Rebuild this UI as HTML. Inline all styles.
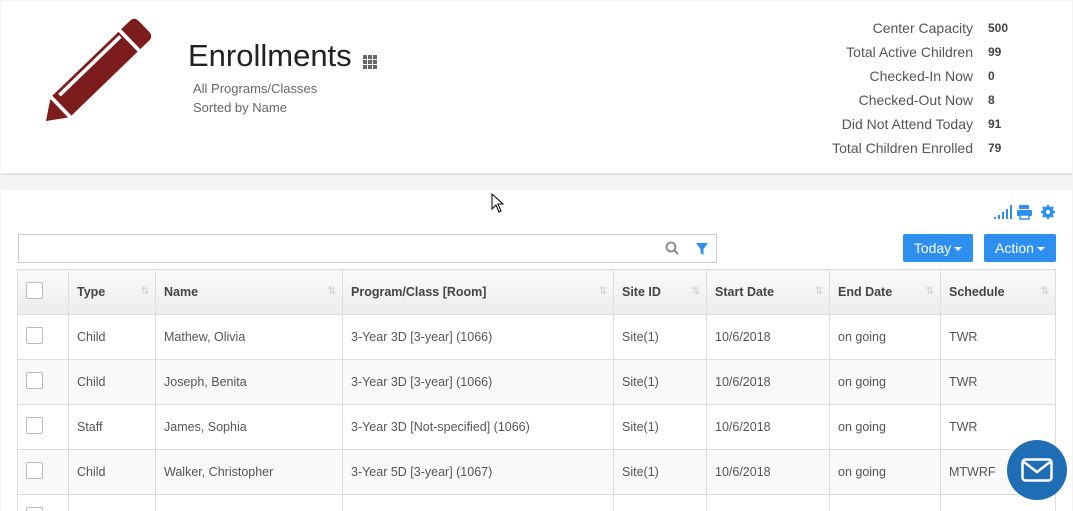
<!DOCTYPE html>
<html><head><meta charset="utf-8"><style>
*{box-sizing:border-box;margin:0;padding:0}
html,body{width:1073px;height:511px;overflow:hidden}
body{background:#f3f3f3;font-family:"Liberation Sans",sans-serif;color:#555;font-size:13px;position:relative}
.top{position:absolute;left:1px;top:1px;width:1071px;height:174px;background:#fff;border-bottom:2px solid #e4e4e4}
.main{position:absolute;left:1px;top:190px;width:1071px;height:321px;background:#fff;overflow:hidden}
h1{position:absolute;left:188px;top:38px;font-weight:normal;font-size:31px;color:#222;font-family:"Liberation Sans",sans-serif}
.sub{position:absolute;left:193px;font-size:13px;color:#666}
.st{position:absolute;text-align:right;font-size:14px;color:#555;width:300px}
.sv{position:absolute;left:988px;font-size:12px;font-weight:bold;color:#444}
table{position:absolute;left:16px;top:79px;border-collapse:collapse;font-size:12.5px}
td,th{border:1px solid #ddd;height:45px;padding-left:8px;text-align:left;vertical-align:middle;color:#555;font-weight:normal}
th{font-weight:bold;background:linear-gradient(#fafafa,#ececec);color:#444;position:relative}
th .s{position:absolute;right:6px;top:16px;color:#ccc;font-size:10px;font-weight:normal}
tr.g td{background:#f9f9f9}
.cb{width:17px;height:17px;border:1px solid #bbb;border-radius:2px;background:#fff;display:inline-block}
.btn{position:absolute;top:234px;height:28px;background:#2d8ff0;color:#fff;font-size:14px;line-height:28px;text-align:center;border-radius:2px}
.caret{display:inline-block;border-left:4px solid transparent;border-right:4px solid transparent;border-top:4px solid #fff;vertical-align:middle;margin-left:3px}
</style></head><body>
<div class="top"></div>
<div class="main">
<table>
<tr><th style="width:51px"><span class="cb"></span></th><th style="width:87px">Type<span class="s">⇅</span></th><th style="width:187px">Name<span class="s">⇅</span></th><th style="width:271px">Program/Class [Room]<span class="s">⇅</span></th><th style="width:93px">Site ID<span class="s">⇅</span></th><th style="width:123px">Start Date<span class="s">⇅</span></th><th style="width:111px">End Date<span class="s">⇅</span></th><th style="width:115px">Schedule<span class="s">⇅</span></th></tr>
<tr><td><span class="cb"></span></td><td>Child</td><td>Mathew, Olivia</td><td>3-Year 3D [3-year] (1066)</td><td>Site(1)</td><td>10/6/2018</td><td>on going</td><td>TWR</td></tr>
<tr class="g"><td><span class="cb"></span></td><td>Child</td><td>Joseph, Benita</td><td>3-Year 3D [3-year] (1066)</td><td>Site(1)</td><td>10/6/2018</td><td>on going</td><td>TWR</td></tr>
<tr><td><span class="cb"></span></td><td>Staff</td><td>James, Sophia</td><td>3-Year 3D [Not-specified] (1066)</td><td>Site(1)</td><td>10/6/2018</td><td>on going</td><td>TWR</td></tr>
<tr class="g"><td><span class="cb"></span></td><td>Child</td><td>Walker, Christopher</td><td>3-Year 5D [3-year] (1067)</td><td>Site(1)</td><td>10/6/2018</td><td>on going</td><td>MTWRF</td></tr>
<tr><td><span class="cb"></span></td><td></td><td></td><td></td><td></td><td></td><td></td><td></td></tr>
</table>
</div>
<svg style="position:absolute;left:0;top:0" width="170" height="140">
<g transform="translate(46,121) rotate(-44) scale(0.92)" fill="#7d1c1c">
<path d="M0 0 L20 -14 L20 14 Z"/>
<rect x="24" y="-15" width="100" height="30"/>
<rect x="30" y="-12" width="92" height="4" fill="#fff"/>
<path d="M128 -15 L141 -15 Q148 -15 148 -8 L148 8 Q148 15 141 15 L128 15 Z"/>
</g>
</svg>
<h1>Enrollments</h1>
<svg style="position:absolute;left:363px;top:55px" width="14" height="14"><g fill="#666"><rect x="0" y="0" width="4" height="4"/><rect x="5" y="0" width="4" height="4"/><rect x="10" y="0" width="4" height="4"/><rect x="0" y="5" width="4" height="4"/><rect x="5" y="5" width="4" height="4"/><rect x="10" y="5" width="4" height="4"/><rect x="0" y="10" width="4" height="4"/><rect x="5" y="10" width="4" height="4"/><rect x="10" y="10" width="4" height="4"/></g></svg>
<div class="sub" style="top:81px">All Programs/Classes</div>
<div class="sub" style="top:100px">Sorted by Name</div>
<div class="st" style="left:673px;top:20px">Center Capacity</div><div class="sv" style="top:21px">500</div>
<div class="st" style="left:673px;top:44px">Total Active Children</div><div class="sv" style="top:45px">99</div>
<div class="st" style="left:673px;top:68px">Checked-In Now</div><div class="sv" style="top:69px">0</div>
<div class="st" style="left:673px;top:92px">Checked-Out Now</div><div class="sv" style="top:93px">8</div>
<div class="st" style="left:673px;top:116px">Did Not Attend Today</div><div class="sv" style="top:117px">91</div>
<div class="st" style="left:673px;top:140px">Total Children Enrolled</div><div class="sv" style="top:141px">79</div>
<svg style="position:absolute;left:993px;top:205px" width="64" height="16"><g fill="#2d8ff0"><rect x="1" y="12" width="2" height="2"/><rect x="5" y="10" width="2" height="4"/><rect x="9" y="7" width="2" height="7"/><rect x="13" y="4" width="2" height="10"/><rect x="17" y="0" width="2" height="14"/>
<rect x="26" y="0" width="10" height="4"/><rect x="24" y="5" width="15" height="6" rx="1"/><rect x="27" y="10" width="9" height="4" fill="#fff" stroke="#2d8ff0" stroke-width="1.5"/>
<circle cx="55" cy="7" r="5.5"/></g><g stroke="#2d8ff0" stroke-width="2.5"><line x1="55" y1="0" x2="55" y2="14"/><line x1="48" y1="7" x2="62" y2="7"/><line x1="50" y1="2" x2="60" y2="12"/><line x1="60" y1="2" x2="50" y2="12"/></g><circle cx="55" cy="7" r="2" fill="#fff"/></svg>
<div style="position:absolute;left:18px;top:234px;width:699px;height:29px;border:1px solid #ccc;background:#fff"></div>
<svg style="position:absolute;left:665px;top:241px" width="45" height="16"><circle cx="6" cy="6" r="4.5" fill="none" stroke="#888" stroke-width="1.8"/><line x1="9" y1="9" x2="13" y2="13" stroke="#888" stroke-width="2"/><path d="M31 2 H43 L38.5 8 V14 L35.5 12 V8 Z" fill="#2d8ff0"/></svg>
<div class="btn" style="left:903px;width:70px">Today<span class="caret"></span></div>
<div class="btn" style="left:984px;width:72px">Action<span class="caret"></span></div>
<div style="position:absolute;left:1007px;top:440px;width:60px;height:60px;border-radius:50%;background:#1f6db5"></div>
<svg style="position:absolute;left:1021px;top:458px" width="32" height="24"><rect x="1.5" y="1.5" width="29" height="21" rx="3" fill="none" stroke="#fff" stroke-width="2.5"/><path d="M3 4 L16 14 L29 4" fill="none" stroke="#fff" stroke-width="2.5"/></svg>
<svg style="position:absolute;left:491px;top:193px" width="14" height="20"><path d="M1 1 L1 16 L5 12 L8 19 L10 18 L7 11 L12 11 Z" fill="#fff" stroke="#000" stroke-width="1"/></svg>
</body></html>
